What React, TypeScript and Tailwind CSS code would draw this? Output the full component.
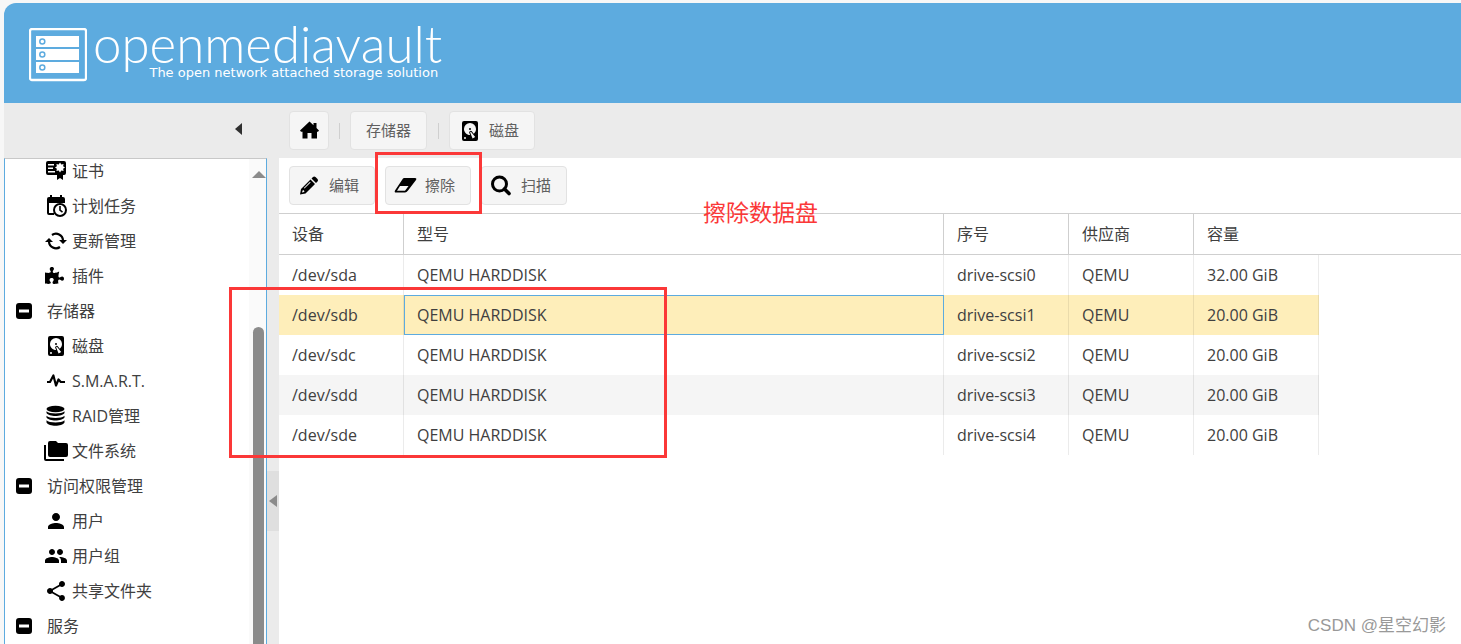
import type { ReactNode } from "react"
import { FaPuzzlePiece } from "react-icons/fa"
import { MdPeople, MdPerson, MdShare } from "react-icons/md"

type IconProps = { className?: string }

const harddisk =
  "M6,2H18A2,2 0 0,1 20,4V20A2,2 0 0,1 18,22H6A2,2 0 0,1 4,20V4A2,2 0 0,1 6,2M12,4A6,6 0 0,0 6,10C6,13.31 8.69,16 12.1,16L11.22,13.77C10.95,13.29 11.11,12.68 11.59,12.4L12.45,11.9C12.93,11.63 13.54,11.79 13.82,12.27L15.74,14.69C17.12,13.59 18,11.9 18,10A6,6 0 0,0 12,4M12,9A1,1 0 0,1 13,10A1,1 0 0,1 12,11A1,1 0 0,1 11,10A1,1 0 0,1 12,9M7,18A1,1 0 0,0 6,19A1,1 0 0,0 7,20A1,1 0 0,0 8,19A1,1 0 0,0 7,18M12.09,13.27L14.58,19.58L17.17,18.08L12.95,12.77L12.09,13.27Z"

function Svg({ children, className = "size-6" }: { children: ReactNode; className?: string }) {
  return (
    <svg viewBox="0 0 24 24" className={`${className} shrink-0 text-black`} fill="currentColor" aria-hidden="true">
      {children}
    </svg>
  )
}

function DiskIcon({ className }: IconProps) {
  return <Svg className={className}><path d={harddisk} /></Svg>
}

function CertificateIcon() {
  return (
    <Svg>
      <path fillRule="evenodd" d="M4 2H20A2 2 0 0 1 22 4V14A2 2 0 0 1 20 16H19V21L16 19L13 21V16H4A2 2 0 0 1 2 14V4A2 2 0 0 1 4 2ZM16 3.500L14.700 5.400L12.400 4.900L12.900 7.200L11 8.500L12.900 9.800L12.400 12.100L14.700 11.600L16 13.500L17.300 11.600L19.600 12.100L19.100 9.800L21 8.500L19.100 7.200L19.600 4.900L17.300 5.400ZM4 5V6.500H10V5ZM4 8.500V10H9V8.500ZM4 12V13.500H11V12Z" />
    </Svg>
  )
}

function CalendarIcon() {
  return (
    <Svg>
      <path d="M5 3H6V1H8V3H16V1H18V3H19A2 2 0 0 1 21 5V9H5V19H10V21H5A2 2 0 0 1 3 19V5A2 2 0 0 1 5 3Z" />
      <circle cx="16" cy="16" r="6" fill="none" stroke="currentColor" strokeWidth="2" />
      <path d="M15.200 12H16.800V15.700L19 17.500L18 18.700L15.200 16.500Z" />
    </Svg>
  )
}

function RefreshIcon() {
  return (
    <Svg>
      <path d="M8 6A7 7 0 0 1 19 11.500M16 18A7 7 0 0 1 5 12.500" fill="none" stroke="currentColor" strokeWidth="2.200" />
      <path d="M15 11H23L19 15ZM1 13L5 9L9 13Z" />
    </Svg>
  )
}

function PulseIcon() {
  return (
    <Svg>
      <path d="M3 13H6L9.400 6.500L12 16.500L14.500 10.500L16.800 13H21" fill="none" stroke="currentColor" strokeWidth="2.200" strokeLinejoin="round" />
    </Svg>
  )
}

function DatabaseIcon() {
  return (
    <Svg>
      <ellipse cx="11.500" cy="5" rx="9" ry="3.300" />
      <path d="M2.500 7.200C5 10.200 18 10.200 20.500 7.200V9C18 13 5 13 2.500 9ZM2.500 11.700C5 14.700 18 14.700 20.500 11.700V13.500C18 17.500 5 17.500 2.500 13.500ZM2.500 16.200C5 19.200 18 19.200 20.500 16.200V18.500C18 22.800 5 22.800 2.500 18.500Z" />
    </Svg>
  )
}

function FoldersIcon() {
  return (
    <Svg>
      <path d="M22,4H14L12,2H6A2,2 0 0,0 4,4V16A2,2 0 0,0 6,18H22A2,2 0 0,0 24,16V6A2,2 0 0,0 22,4M2,6H0V20A2,2 0 0,0 2,22H20V20H2V6Z" />
    </Svg>
  )
}

function HomeIcon() {
  return (
    <Svg>
      <path d="M12.500 2.500L3 11.500L4 12.800H5.500V19.500H10.500V14H14.500V19.500H20V12.800H21L22 11.500L19.500 9V4H16.500V6.200Z" />
    </Svg>
  )
}

function PencilIcon() {
  return (
    <Svg>
      <path fillRule="evenodd" d="M15 3Q16.200 1.800 17.500 3L19.500 5Q20.700 6.300 19.500 7.500L18 9L13.500 4.500ZM12.500 5.500L17 10L7.500 19.500L2 20.500L3 15ZM4.600 16.500L4 18.500L6 17.900L6.500 17.200L5.300 16ZM12 7.800L5.900 13.900L6.500 14.500L12.600 8.400Z" />
    </Svg>
  )
}

function EraserIcon() {
  return (
    <Svg>
      <path fillRule="evenodd" d="M10 4H21Q23 4 22 6L14 16.500Q12.500 18.500 11 18.500H2Q0 18.500 1 16.500L8 6Q9 4 10 4ZM6 12L3 16.800H11L14.500 12Z" />
    </Svg>
  )
}

function SearchIcon() {
  return (
    <Svg>
      <circle cx="9.500" cy="10" r="7" fill="none" stroke="currentColor" strokeWidth="3" />
      <path d="M14.500 15L19 19.500" fill="none" stroke="currentColor" strokeWidth="3.600" strokeLinecap="round" />
    </Svg>
  )
}

function Logo() {
  return (
    <svg viewBox="0 0 58 54" className="h-[54px] w-[58px] shrink-0" fill="none" aria-hidden="true">
      <rect x="1" y="1" width="56" height="51" rx="2" stroke="white" strokeWidth="2.300" />
      <path d="M7 8H50V19H7ZM7 21H50V32H7ZM7 34H50V45H7Z" fill="white" />
      <g stroke="#5dabdf" strokeWidth="1.500">
        <circle cx="13.300" cy="13.500" r="2.500" />
        <circle cx="13.300" cy="26.500" r="2.500" />
        <circle cx="13.300" cy="39.500" r="2.500" />
      </g>
    </svg>
  )
}

const menu = [
  {
    name: "",
    items: [
      { label: "证书", icon: <CertificateIcon /> },
      { label: "计划任务", icon: <CalendarIcon /> },
      { label: "更新管理", icon: <RefreshIcon /> },
      { label: "插件", icon: <FaPuzzlePiece className="mr-1 size-[19px] text-black" /> },
    ],
  },
  {
    name: "存储器",
    items: [
      { label: "磁盘", icon: <DiskIcon /> },
      { label: "S.M.A.R.T.", icon: <PulseIcon /> },
      { label: "RAID管理", icon: <DatabaseIcon /> },
      { label: "文件系统", icon: <FoldersIcon /> },
    ],
  },
  {
    name: "访问权限管理",
    items: [
      { label: "用户", icon: <MdPerson className="size-6 text-black" /> },
      { label: "用户组", icon: <MdPeople className="size-6 text-black" /> },
      { label: "共享文件夹", icon: <MdShare className="size-6 text-black" /> },
    ],
  },
  { name: "服务", items: [] },
]

const disks = [
  { device: "/dev/sda", serial: "drive-scsi0", size: "32.00 GiB" },
  { device: "/dev/sdb", serial: "drive-scsi1", size: "20.00 GiB" },
  { device: "/dev/sdc", serial: "drive-scsi2", size: "20.00 GiB" },
  { device: "/dev/sdd", serial: "drive-scsi3", size: "20.00 GiB" },
  { device: "/dev/sde", serial: "drive-scsi4", size: "20.00 GiB" },
]

const columns = ["设备", "型号", "序号", "供应商", "容量"]

const button = "flex h-[39px] items-center rounded border border-[#e2e2e2] bg-[#f5f5f5] text-[15px] text-[#606060]"
const iconButton = `${button} gap-[7px] pl-2 pr-[15px]`

function Sidebar() {
  return (
    <nav className="flex w-[263px] shrink-0 overflow-hidden border-x border-t border-x-[#5dabdf] border-t-[#c8c8c8] bg-white">
      <div className="-mt-[6px] grow">
        {menu.map((group) => (
          <div key={group.name}>
            {group.name && (
              <button className="flex h-[35px] w-full items-center gap-[15px] pl-[11px] text-left">
                <svg viewBox="0 0 16 16" className="size-4" aria-hidden="true">
                  <rect width="16" height="16" rx="3" />
                  <path d="M3 6.500H13V9.500H3Z" fill="white" />
                </svg>
                {group.name}
              </button>
            )}
            {group.items.map((item) => (
              <a key={item.label} href="#" className="flex h-[35px] items-center pl-[39px]">
                <span className="mr-1 flex w-6 justify-center">{item.icon}</span>
                {item.label}
              </a>
            ))}
          </div>
        ))}
      </div>
      <div className="flex w-[17px] flex-col items-center bg-[#fafafa] pl-0.5 pt-3">
        <svg viewBox="0 0 14 7" className="h-[7px] w-[14px]" aria-hidden="true"><path d="M7 0L14 7H0Z" fill="#8b8b8b" /></svg>
        <div className="mt-[149px] w-[11px] grow rounded-t-full bg-[#8b8b8b]" />
      </div>
    </nav>
  )
}

function DiskTable() {
  return (
    <table className="w-full table-fixed border-separate border-spacing-0 text-left">
      <colgroup>
        <col className="w-[125px]" />
        <col className="w-[540px]" />
        <col className="w-[125px]" />
        <col className="w-[125px]" />
        <col className="w-[125px]" />
        <col />
      </colgroup>
      <thead>
        <tr>
          {columns.map((name) => (
            <th key={name} className="h-[42px] border-y border-r border-[#cfcfcf] py-0 pl-[13px] font-normal nth-5:border-r-0">
              {name}
            </th>
          ))}
          <td className="border-y border-[#cfcfcf]"></td>
        </tr>
      </thead>
      <tbody>
        {disks.map((disk, i) => {
          const bg = i === 1 ? "bg-[#feeeba]" : i === 3 ? "bg-[#f5f5f5]" : "bg-white"
          const cell = `h-10 border-r border-black/8 py-0 pl-[13px] ${bg}`
          return (
            <tr key={disk.device}>
              <td className={cell}>{disk.device}</td>
              <td className={i === 1 ? `${cell} outline -outline-offset-1 outline-[#5dabdf]` : cell}>QEMU HARDDISK</td>
              <td className={cell}>{disk.serial}</td>
              <td className={cell}>QEMU</td>
              <td className={cell}>{disk.size}</td>
              <td></td>
            </tr>
          )
        })}
      </tbody>
    </table>
  )
}

export default function App() {
  return (
    <div className="relative flex h-screen flex-col overflow-hidden bg-[#f7f7f7] pl-1 pt-[3px] font-['Open_Sans','Noto_Sans_CJK_SC',sans-serif] text-base text-[#404040]">
      <header className="flex h-[100px] shrink-0 items-start rounded-tl-xl bg-[#5dabdf] pl-[25px] pt-[25px] text-white">
        <Logo />
        <div className="flex flex-col items-end pl-[6px]">
          <h1 className="font-['Lato',sans-serif] text-[51px] font-light leading-8">openmediavault</h1>
          <p className="pr-1 pt-[5px] font-['DejaVu_Sans',sans-serif] text-[13px] leading-4">The open network attached storage solution</p>
        </div>
      </header>

      <div className="flex h-[55px] shrink-0 items-center bg-[#ebebeb]">
        <div className="flex w-[285px] justify-end pb-1 pr-[46px]">
          <button aria-label="收起">
            <svg viewBox="0 0 8 12" className="h-3 w-2" fill="#303030"><path d="M7 0V12L0 6Z" /></svg>
          </button>
        </div>
        <button className={`${button} w-10 justify-center`} aria-label="主页"><HomeIcon /></button>
        <span className="mx-[10px] h-4 w-px bg-[#cfcfcf]" />
        <button className={`${button} px-[15px]`}>存储器</button>
        <span className="ml-[11px] mr-[10px] h-4 w-px bg-[#cfcfcf]" />
        <button className={iconButton}><DiskIcon />磁盘</button>
      </div>

      <div className="flex min-h-0 grow bg-[#ebebeb]">
        <Sidebar />
        <div className="flex w-3 shrink-0 items-start">
          <button className="mt-[313px] flex h-[60px] w-full items-center justify-center bg-[#dfdfdf]" aria-label="折叠">
            <svg viewBox="0 0 8 12" className="h-3 w-2" fill="#8b8b8b"><path d="M8 0V12L0 6Z" /></svg>
          </button>
        </div>
        <main className="min-w-0 grow bg-white">
          <div className="flex h-[55px] items-center gap-[10px] pl-[10px]">
            <button className={iconButton}><PencilIcon />编辑</button>
            <button className={iconButton}><EraserIcon />擦除</button>
            <button className={iconButton}><SearchIcon />扫描</button>
          </div>
          <DiskTable />
        </main>
      </div>

      <div className="pointer-events-none absolute left-[375px] top-[152px] h-[62px] w-[107px] border-3 border-[#fb3838]" />
      <div className="pointer-events-none absolute left-[229px] top-[287px] h-[171px] w-[438px] border-3 border-[#fb3838]" />
      <p className="absolute left-[703px] top-[196px] text-[23px] leading-8 text-[#fb3838]">擦除数据盘</p>
      <p className="absolute bottom-[6px] right-[15px] font-['Liberation_Sans','Noto_Sans_CJK_SC',sans-serif] text-[17px] text-[#999999]">CSDN @星空幻影</p>
    </div>
  )
}
